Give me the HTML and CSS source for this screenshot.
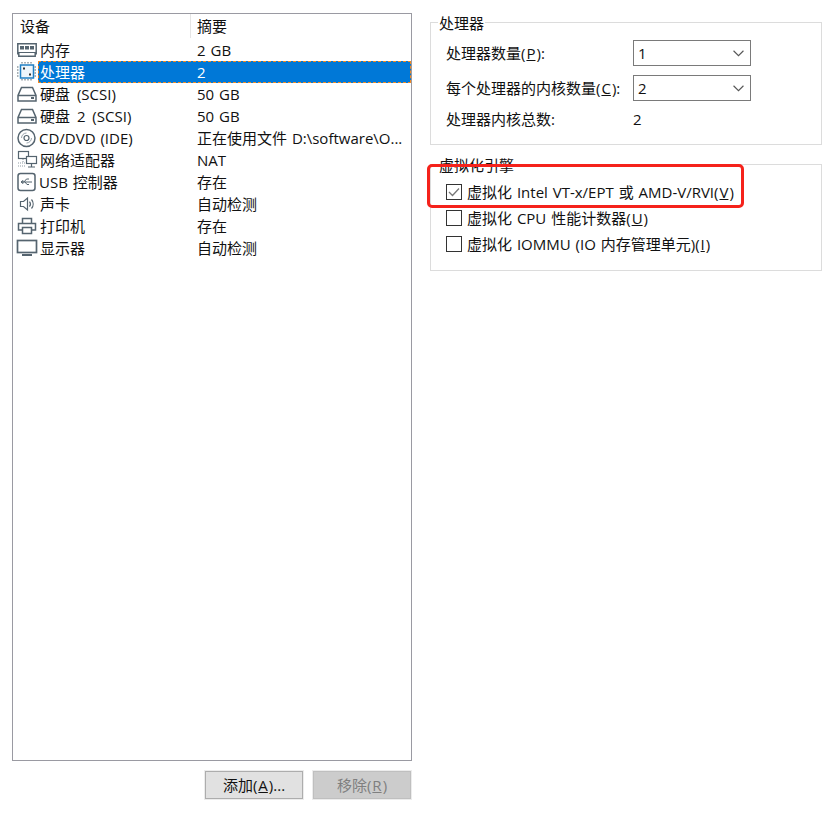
FILE: index.html
```html
<!DOCTYPE html>
<html lang="zh-CN">
<head>
<meta charset="utf-8">
<title>虚拟机设置</title>
<link rel="stylesheet" href="styles.css">
</head>
<body>
<div class="page">
  <section class="left">
    <div class="list">
      <div class="head">
        <div class="c1">设备</div>
        <div class="c2">摘要</div>
      </div>
      <div class="row">
        <svg class="ico" viewBox="0 0 22 20"><path d="M1.800 3.800h18.400v10h-1v2.400H2.800v-2.400h-1z" fill="none" stroke="#55646f" stroke-width="1.500"/><path d="M4 6h4v3.500H4zM9 6h4v3.500H9zM14 6h4v3.500h-4z" fill="#55646f"/><path d="M2 12.500h18" stroke="#55646f"/></svg>
        <div class="cells"><span class="name">内存</span><span class="val">2 GB</span></div>
      </div>
      <div class="row">
        <svg class="ico" viewBox="0 0 22 20"><rect x="4.500" y="3" width="13" height="13" fill="#eef6fc" stroke="#1f7fc4" stroke-width="1.500"/><path d="M6 0v2M9 0v2M12 0v2M15 0v2M6 17v2M9 17v2M12 17v2M15 17v2M1 5h2M1 8h2M1 11h2M1 14h2M18.500 5h2M18.500 8h2M18.500 11h2M18.500 14h2" stroke="#55646f" stroke-dasharray="1.500 .5"/><rect x="7" y="5.500" width="2" height="2" fill="#333"/><rect x="13" y="11.500" width="2" height="2" fill="#333"/></svg>
        <div class="cells selected"><span class="name">处理器</span><span class="val">2</span></div>
      </div>
      <div class="row">
        <svg class="ico" viewBox="0 0 22 20"><path d="M5.500 3.500h11l3.500 8v5.500H2v-5.500zM2 11.500h18" fill="none" stroke="#55646f" stroke-width="1.500"/><rect x="15" y="13" width="3" height="2" fill="#55646f"/></svg>
        <div class="cells"><span class="name wide">硬盘 (SCSI)</span><span class="val">50 GB</span></div>
      </div>
      <div class="row">
        <svg class="ico" viewBox="0 0 22 20"><path d="M5.500 3.500h11l3.500 8v5.500H2v-5.500zM2 11.500h18" fill="none" stroke="#55646f" stroke-width="1.500"/><rect x="15" y="13" width="3" height="2" fill="#55646f"/></svg>
        <div class="cells"><span class="name wide">硬盘 2 (SCSI)</span><span class="val">50 GB</span></div>
      </div>
      <div class="row">
        <svg class="ico" viewBox="0 0 22 20"><circle cx="10.500" cy="10" r="8.500" fill="none" stroke="#55646f" stroke-width="1.500"/><circle cx="10.500" cy="10" r="2.500" fill="none" stroke="#55646f" stroke-width="1.200"/><path d="M5.500 10a5 5 0 0 1 5-5M15.500 10a5 5 0 0 1-5 5" fill="none" stroke="#9aa5ae"/></svg>
        <div class="cells"><span class="name tight">CD/DVD (IDE)</span><span class="val">正在使用文件 D:\software\O...</span></div>
      </div>
      <div class="row">
        <svg class="ico" viewBox="0 0 22 20"><rect x="2.500" y="1.500" width="10" height="7" fill="none" stroke="#55646f" stroke-width="1.200"/><rect x="10.500" y="6.500" width="10" height="7" fill="#fff" stroke="#55646f" stroke-width="1.200"/><path d="M15.500 13.500v3M12 17h7" stroke="#55646f" stroke-width="1.200"/><path d="M7 9v3M2 13h8M2 16h8" stroke="#8f9ba4" stroke-dasharray="1 1"/></svg>
        <div class="cells"><span class="name">网络适配器</span><span class="val">NAT</span></div>
      </div>
      <div class="row">
        <svg class="ico" viewBox="0 0 22 20"><rect x="2" y="1.500" width="17" height="17" rx="2.500" fill="none" stroke="#55646f" stroke-width="1.500"/><path d="M5 10h11M8 10l2.500-3H13M9 10l2 2.500h2M5 10l2-1.500v3z" fill="none" stroke="#55646f"/></svg>
        <div class="cells"><span class="name tight">USB 控制器</span><span class="val">存在</span></div>
      </div>
      <div class="row">
        <svg class="ico" viewBox="0 0 22 20"><path d="M4.500 7.500H7.500L11.500 4v12L7.500 12.500H4.500z" fill="none" stroke="#55646f" stroke-width="1.200"/><path d="M13.500 7.500a4 4 0 0 1 0 5M15.500 5.500a7 7 0 0 1 0 9" fill="none" stroke="#55646f" stroke-width="1.200"/></svg>
        <div class="cells"><span class="name">声卡</span><span class="val">自动检测</span></div>
      </div>
      <div class="row">
        <svg class="ico" viewBox="0 0 22 20"><path d="M6.500 7V2.500h9V7M6.500 14H2.500V7.500h17V14h-4" fill="none" stroke="#55646f" stroke-width="1.500"/><rect x="6.500" y="11.500" width="9" height="6" fill="none" stroke="#55646f" stroke-width="1.500"/></svg>
        <div class="cells"><span class="name">打印机</span><span class="val">存在</span></div>
      </div>
      <div class="row">
        <svg class="ico" viewBox="0 0 22 20"><rect x="1.500" y="2.500" width="19" height="12" fill="none" stroke="#55646f" stroke-width="1.700"/><path d="M6 17h10" stroke="#55646f" stroke-width="2"/></svg>
        <div class="cells"><span class="name">显示器</span><span class="val">自动检测</span></div>
      </div>
    </div>
    <div class="buttons">
      <div class="btn">添加(<u>A</u>)...</div>
      <div class="btn off">移除(<u>R</u>)</div>
    </div>
  </section>
  <section class="right">
    <div class="group first">
      <div class="legend">处理器</div>
      <div class="form-row">
        <span class="lab">处理器数量(<u>P</u>):</span>
        <div class="combo"><span>1</span><svg class="chev" viewBox="0 0 10 6"><path d="M.5.500L5 5 9.500.5" fill="none" stroke="#555"/></svg></div>
      </div>
      <div class="form-row">
        <span class="lab">每个处理器的内核数量(<u>C</u>):</span>
        <div class="combo"><span>2</span><svg class="chev" viewBox="0 0 10 6"><path d="M.5.500L5 5 9.500.5" fill="none" stroke="#555"/></svg></div>
      </div>
      <div class="form-row total">
        <span class="lab">处理器内核总数:</span>
        <span class="total-val">2</span>
      </div>
    </div>
    <div class="group second">
      <div class="legend">虚拟化引擎</div>
      <div class="check-row">
        <svg class="box" viewBox="0 0 16 16"><rect x=".5" y=".5" width="15" height="15" fill="#fff" stroke="#333"/><path d="M3 8l3.500 3.500L13 4.500" fill="none" stroke="#777" stroke-width="1.300"/></svg>
        <span>虚拟化 Intel VT-x/EPT 或 AMD-V/RVI(<u>V</u>)</span>
      </div>
      <div class="check-row">
        <svg class="box" viewBox="0 0 16 16"><rect x=".5" y=".5" width="15" height="15" fill="#fff" stroke="#333"/></svg>
        <span>虚拟化 CPU 性能计数器(<u>U</u>)</span>
      </div>
      <div class="check-row">
        <svg class="box" viewBox="0 0 16 16"><rect x=".5" y=".5" width="15" height="15" fill="#fff" stroke="#333"/></svg>
        <span>虚拟化 IOMMU (IO 内存管理单元)(<u>I</u>)</span>
      </div>
      <div class="mark"></div>
    </div>
  </section>
</div>
</body>
</html>
```
FILE: styles.css
```css
* { box-sizing: border-box; }
html, body { margin: 0; background: #fff; }
body {
  width: 834px;
  height: 814px;
  overflow: hidden;
  font: 15px/20px "Open Sans", "Noto Sans CJK SC", sans-serif;
  word-spacing: 1px;
  color: #111;
}
u { margin: 0 1px; }
.page { display: flex; padding: 13px 12px 0; gap: 18px; }
.left { width: 400px; flex: none; }
.list { height: 748px; border: 1px solid #9a9aa2; }
.head { display: flex; height: 25px; }
.c1 { width: 177px; padding: 2px 0 0 7px; }
.c2 { padding: 2px 0 0 6px; border-left: 1px solid #e5e5e5; height: 24px; }
.row { display: flex; align-items: center; height: 22px; }
.ico { width: 22px; height: 20px; margin-left: 3px; flex: none; }
.cells { display: flex; flex: 1; height: 22px; line-height: 22px; white-space: nowrap; }
.name { width: 159px; flex: none; padding-left: 2px; }
.name.tight { padding-left: 1px; }
.name.wide { word-spacing: 3px; }
.selected { color: #fff; background: #0078d7; outline: 1px dashed #f08a24; outline-offset: -1px; }
.buttons { display: flex; justify-content: flex-end; gap: 10px; margin-top: 10px; padding-right: 1px; }
.btn {
  width: 98px;
  height: 28px;
  background: #e1e1e1;
  border: 1px solid #adadad;
  outline: 1px solid #ececec;
  text-align: center;
  line-height: 26px;
}
.btn.off { background: #cccccc; border-color: #bfbfbf; color: #7f7f7f; }
.right { width: 392px; flex: none; padding-top: 9px; }
.group { border: 1px solid #dcdcdc; position: relative; }
.group.first { height: 123px; padding-top: 17px; }
.group.second { height: 107px; margin-top: 19px; padding-top: 14px; }
.legend {
  position: absolute;
  left: 7px;
  top: -10px;
  padding: 0 1px;
  background: #fff;
}
.form-row { display: flex; align-items: center; height: 26px; margin-bottom: 9px; padding-left: 15px; }
.lab { width: 187px; flex: none; white-space: nowrap; }
.combo {
  width: 118px;
  height: 26px;
  border: 1px solid #7a7a7a;
  display: flex;
  align-items: center;
  justify-content: space-between;
  padding: 0 6px 0 4px;
}
.chev { width: 11px; height: 7px; }
.total { height: 20px; margin-top: -1px; }
.check-row { display: flex; align-items: center; height: 26px; padding-left: 15px; white-space: nowrap; }
.box { width: 16px; height: 16px; margin-right: 5px; flex: none; }
.mark {
  position: absolute;
  left: -4px;
  top: -1px;
  width: 317px;
  height: 44px;
  border: 3px solid #f5221b;
  border-radius: 5px;
}
```
